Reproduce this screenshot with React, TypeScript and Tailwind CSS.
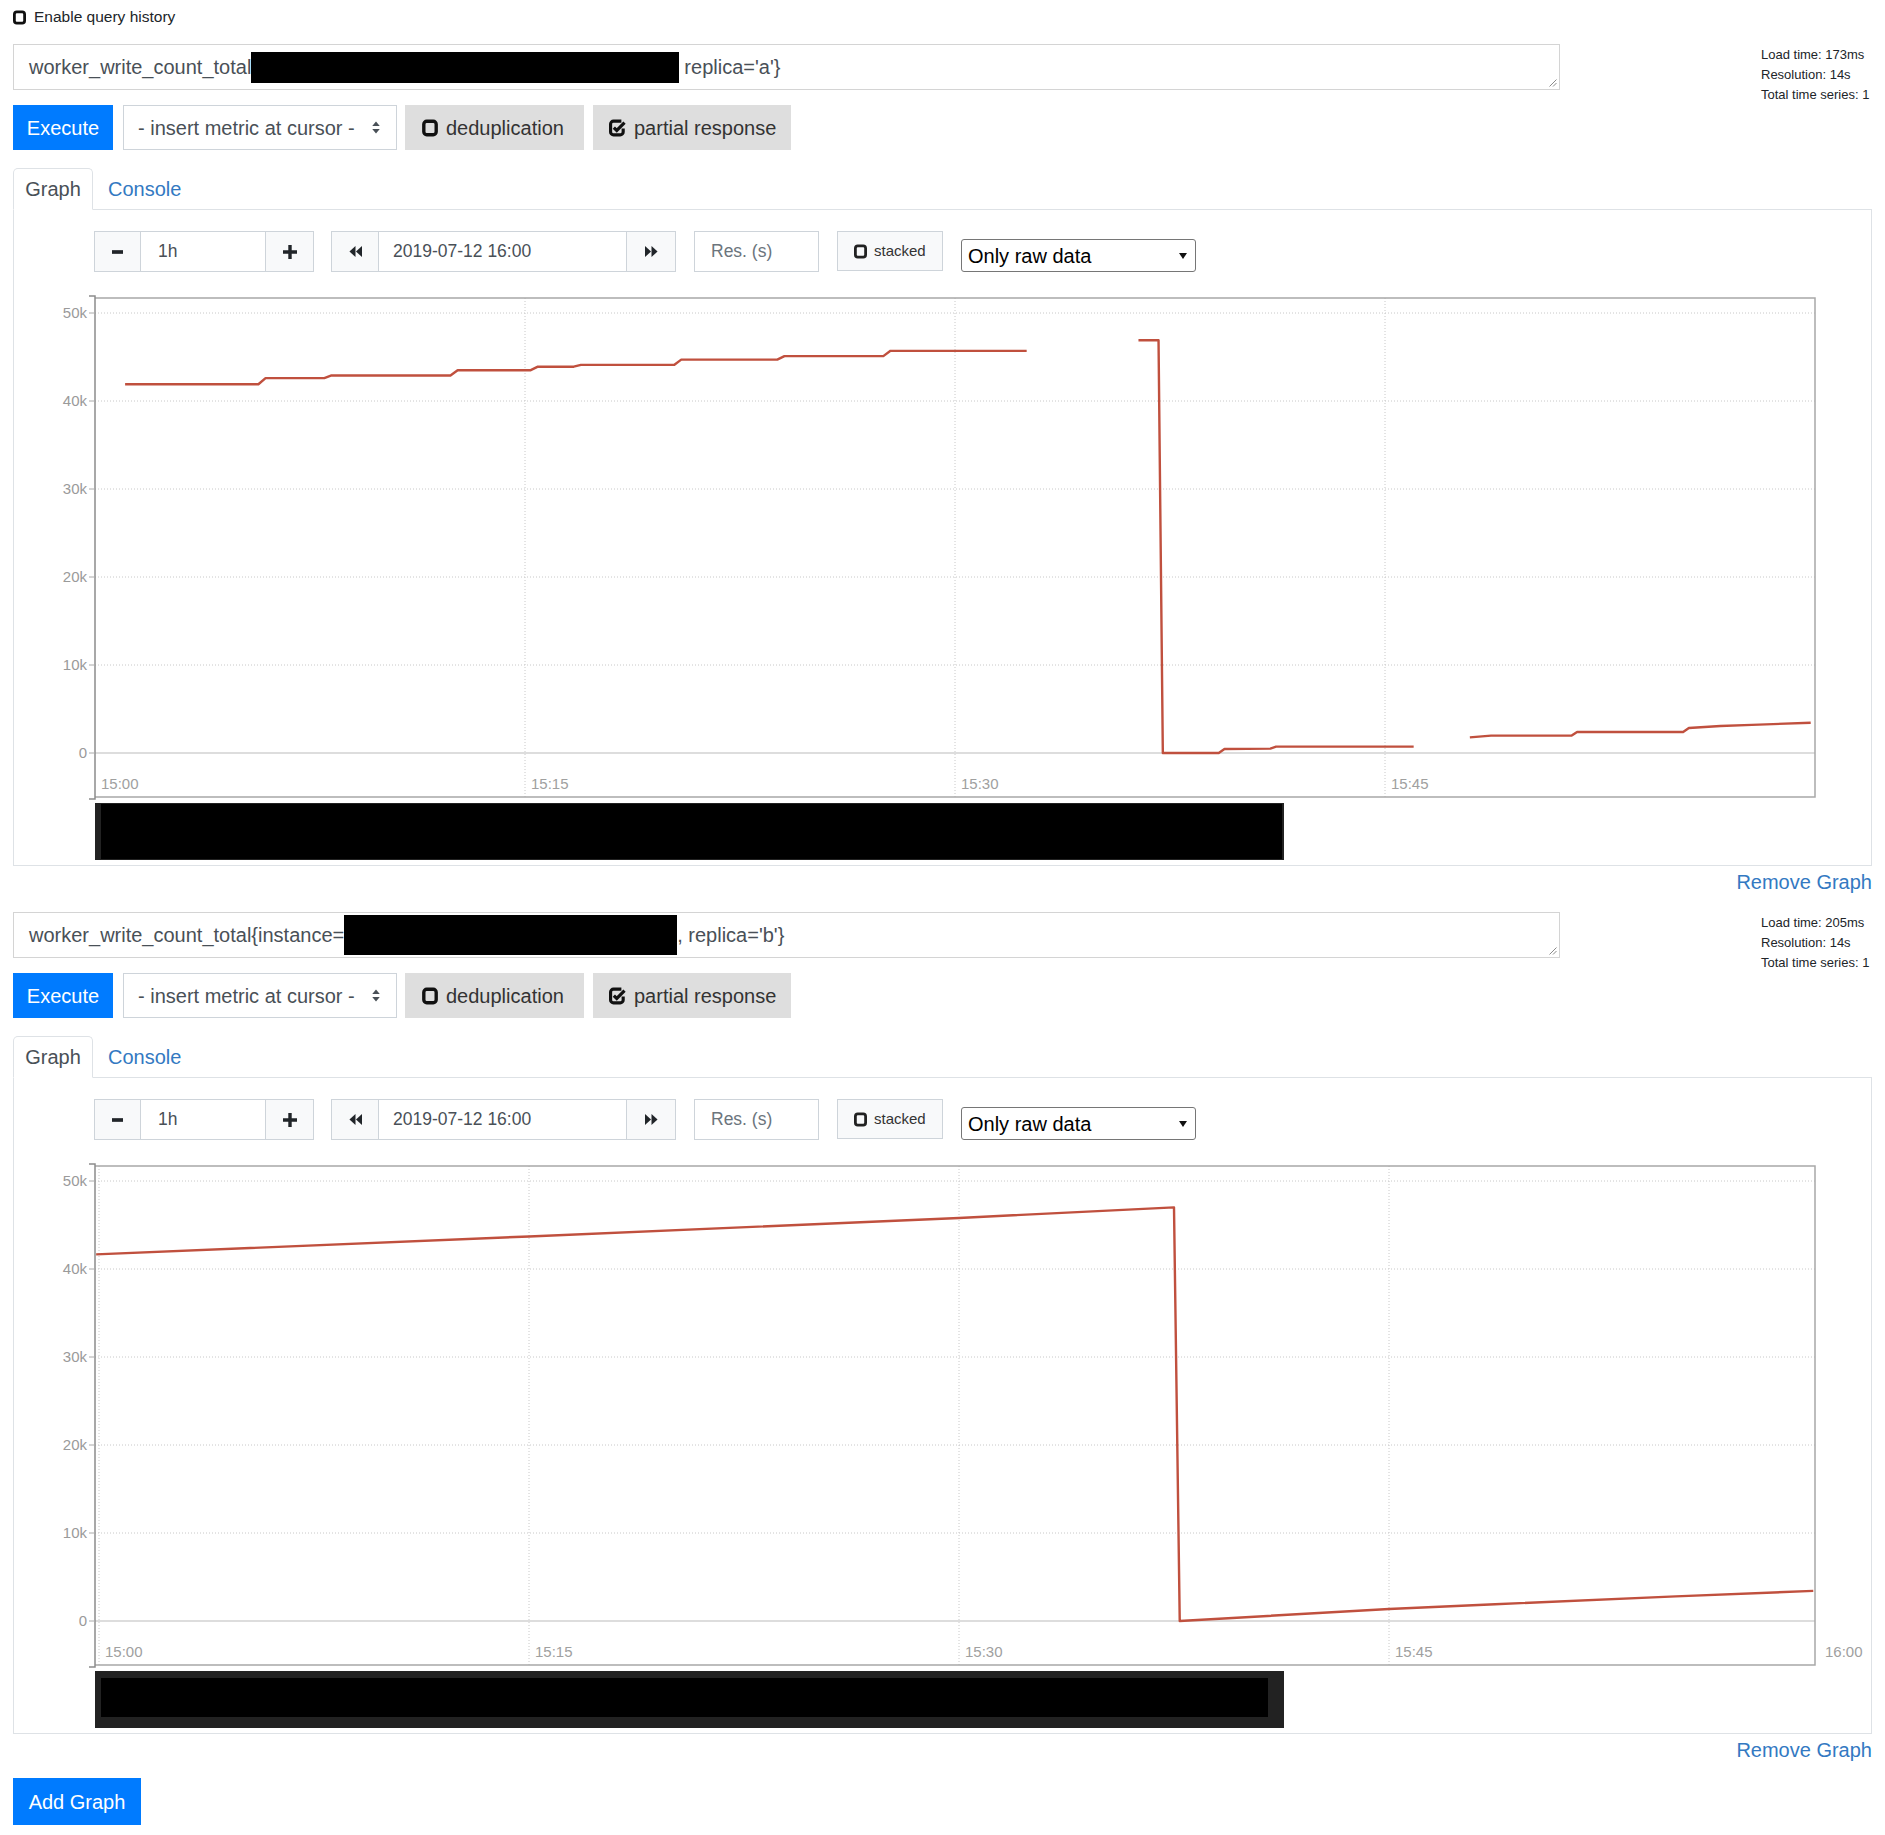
import React from 'react';

type Pt = [number, number];

const Square = ({ className = '' }: { className?: string }) => (
  <svg viewBox="0 0 14 16" className={className}>
    <rect x="1.5" y="2" width="11" height="12" rx="2.6" fill="none" stroke="currentColor" strokeWidth="3" />
  </svg>
);

const CheckSquare = ({ className = '' }: { className?: string }) => (
  <svg viewBox="0 0 16 16" className={className}>
    <path d="M12.6 8.5V11.5a2.6 2.6 0 0 1-2.6 2.6H4a2.6 2.6 0 0 1-2.6-2.6V4.5A2.6 2.6 0 0 1 4 1.9h7" fill="none" stroke="currentColor" strokeWidth="2.8" />
    <path d="M4.3 7.6l2.6 2.6 6.9-7" fill="none" stroke="currentColor" strokeWidth="2.8" />
  </svg>
);

const SortIcon = () => (
  <svg viewBox="0 0 10 16" className="w-[10px] h-[15px] text-[#495057]">
    <polygon points="1,6.5 5,1.5 9,6.5" fill="currentColor" />
    <polygon points="1,9.5 5,14.5 9,9.5" fill="currentColor" />
  </svg>
);

const Minus = () => (
  <svg viewBox="0 0 12 4" className="w-[11px] h-[4px]">
    <rect x="0" y="0" width="12" height="4" fill="#212529" />
  </svg>
);

const Plus = () => (
  <svg viewBox="0 0 14 14" className="w-[14px] h-[14px]">
    <path d="M7 0v14M0 7h14" stroke="#212529" strokeWidth="3.4" />
  </svg>
);

const Backward = () => (
  <svg viewBox="0 0 16 14" className="w-[15px] h-[13px]">
    <polygon points="8,1 1.5,7 8,13" fill="#212529" />
    <polygon points="15,1 8.5,7 15,13" fill="#212529" />
  </svg>
);

const Forward = () => (
  <svg viewBox="0 0 16 14" className="w-[15px] h-[13px]">
    <polygon points="1,1 7.5,7 1,13" fill="#212529" />
    <polygon points="8,1 14.5,7 8,13" fill="#212529" />
  </svg>
);

const series1: Pt[][] = [
  [
    [1.05, 41.9], [5.7, 41.9], [5.95, 42.6], [8.0, 42.6], [8.25, 42.9], [12.4, 42.9], [12.65, 43.5],
    [15.2, 43.5], [15.45, 43.9], [16.7, 43.9], [16.95, 44.1], [20.2, 44.1], [20.45, 44.7], [23.8, 44.7],
    [24.05, 45.1], [27.5, 45.1], [27.75, 45.7], [32.5, 45.7],
  ],
  [
    [36.4, 46.9], [37.1, 46.9], [37.25, 0], [39.2, 0], [39.4, 0.45], [41.0, 0.5], [41.2, 0.72], [46.0, 0.72],
  ],
  [
    [47.96, 1.78], [48.7, 1.97], [51.5, 1.97], [51.7, 2.39], [55.4, 2.39], [55.6, 2.84], [56.7, 3.07],
    [57.8, 3.2], [59.85, 3.44],
  ],
];

const series2: Pt[][] = [
  [
    [-0.1, 41.66], [15, 43.7], [30, 45.8], [37.5, 47.0], [37.7, 0], [45, 1.37], [48.7, 1.9], [55, 2.8], [59.8, 3.42],
  ],
];

function Chart({ segments, x0, labels, grids }: { segments: Pt[][]; x0: number; labels: number[]; grids: number[] }) {
  const px = (m: number) => x0 - 14 + (m * 1720) / 60;
  const py = (k: number) => 463 - k * 8.8;
  const names: Record<number, string> = { 0: '15:00', 15: '15:15', 30: '15:30', 45: '15:45', 60: '16:00' };
  return (
    <svg width="1857" height="510" className="block mt-[18px]" fontFamily="'Liberation Sans', Arial, sans-serif">
      {[10, 20, 30, 40, 50].map((k) => (
        <line key={k} x1="81" x2="1801" y1={py(k)} y2={py(k)} stroke="#c8c8c8" strokeDasharray="1 2" />
      ))}
      {grids.map((m) => (
        <line key={m} x1={px(m)} x2={px(m)} y1="8" y2="507" stroke="#c8c8c8" strokeDasharray="1 2" />
      ))}
      <line x1="81" x2="1801" y1="463" y2="463" stroke="#dddddd" strokeWidth="2" />
      <path d="M81 8H1801V507H81" fill="none" stroke="#a8a8a8" strokeWidth="1.5" />
      <path d="M75 6H81V509H75" fill="none" stroke="#8c8c8c" strokeWidth="1.5" />
      {[0, 10, 20, 30, 40, 50].map((k) => (
        <g key={k}>
          <line x1="75" x2="81" y1={py(k)} y2={py(k)} stroke="#aaaaaa" />
          <text x="73" y={py(k) + 5} textAnchor="end" fontSize="15" fill="#9a9a9a">
            {k === 0 ? '0' : `${k}k`}
          </text>
        </g>
      ))}
      {labels.map((m) => (
        <text key={m} x={px(m) + 6} y="499" fontSize="15" fill="#a0a0a0">
          {names[m]}
        </text>
      ))}
      {segments.map((s, i) => (
        <polyline
          key={i}
          points={s.map(([m, k]) => `${px(m)},${py(k)}`).join(' ')}
          fill="none"
          stroke="#c0503e"
          strokeWidth="2.4"
          strokeLinejoin="round"
        />
      ))}
    </svg>
  );
}

function QueryBox({ prefix, blackW, blackH, suffix, suffixGap }: { prefix: string; blackW: number; blackH: number; suffix: string; suffixGap: number }) {
  return (
    <div className="relative w-[1547px] h-[46px] border border-[#d4d4d4] flex items-center pl-[15px] text-[20px] text-[#495057] whitespace-pre">
      <span>{prefix}</span>
      <span className="bg-black" style={{ width: blackW, height: blackH }} />
      <span style={{ marginLeft: suffixGap }}>{suffix}</span>
      <svg viewBox="0 0 10 10" className="absolute right-[2px] bottom-[2px] w-[10px] h-[10px]">
        <path d="M9.5 2.5L2.5 9.5M9.5 6L6 9.5" stroke="#8a8a8a" strokeWidth="1" />
      </svg>
    </div>
  );
}

function GraphPanel({
  q,
}: {
  q: {
    prefix: string;
    blackW: number;
    blackH: number;
    suffix: string;
    suffixGap: number;
    load: string;
    segments: Pt[][];
    x0: number;
    labels: number[];
    grids: number[];
    legend: 'a' | 'b';
  };
}) {
  return (
    <div>
      <div className="flex items-start h-[46px]">
        <QueryBox prefix={q.prefix} blackW={q.blackW} blackH={q.blackH} suffix={q.suffix} suffixGap={q.suffixGap} />
        <div className="ml-auto mt-px w-[111px] text-[13px] leading-[20px] text-[#212529] whitespace-nowrap">
          <div>Load time: {q.load}</div>
          <div>Resolution: 14s</div>
          <div>Total time series: 1</div>
        </div>
      </div>

      <div className="mt-[15px] flex h-[45px] text-[20px]">
        <button className="w-[100px] h-full bg-[#007bff] text-white">Execute</button>
        <div className="ml-[10px] w-[274px] h-full border border-[#ced4da] flex items-center justify-between pl-[14px] pr-[15px] text-[#495057]">
          <span>- insert metric at cursor -</span>
          <SortIcon />
        </div>
        <button className="ml-[8px] w-[179px] h-full bg-[#dedede] flex items-center pl-[17px] text-[#333]">
          <Square className="w-[16px] h-[18px] text-[#111]" />
          <span className="ml-[8px]">deduplication</span>
        </button>
        <button className="ml-[9px] w-[198px] h-full bg-[#dedede] flex items-center pl-[16px] text-[#333]">
          <CheckSquare className="w-[18px] h-[18px] text-[#111]" />
          <span className="ml-[7px]">partial response</span>
        </button>
      </div>

      <div className="mt-[18px] flex h-[42px] border-b border-[#dee2e6] text-[20px]">
        <div className="w-[80px] h-[42px] -mb-px bg-white border border-[#dee2e6] border-b-white rounded-t-[5px] flex items-center justify-center text-[#495057]">
          Graph
        </div>
        <div className="pl-[15px] flex items-center text-[#3379c2]">Console</div>
      </div>

      <div className="border-x border-b border-[#dee2e6] pt-[21px] pb-[5px]">
        <div className="ml-[80px] flex items-start h-[41px] text-[17.5px] text-[#495057]">
          <div className="w-[47px] h-[41px] bg-[#f8f9fa] border border-[#ced4da] flex items-center justify-center">
            <Minus />
          </div>
          <div className="w-[124px] h-[41px] border-y border-[#ced4da] bg-white flex items-center pl-[17px]">1h</div>
          <div className="w-[49px] h-[41px] bg-[#f8f9fa] border border-[#ced4da] flex items-center justify-center">
            <Plus />
          </div>
          <div className="ml-[17px] w-[48px] h-[41px] bg-[#f8f9fa] border border-[#ced4da] flex items-center justify-center">
            <Backward />
          </div>
          <div className="w-[247px] h-[41px] border-y border-[#ced4da] bg-white flex items-center pl-[14px]">2019-07-12 16:00</div>
          <div className="w-[50px] h-[41px] bg-[#f8f9fa] border border-[#ced4da] flex items-center justify-center">
            <Forward />
          </div>
          <div className="ml-[18px] w-[125px] h-[41px] border border-[#ced4da] bg-white flex items-center pl-[16px] text-[#6c757d]">
            Res. (s)
          </div>
          <div className="ml-[18px] w-[106px] h-[40px] bg-[#f8f9fa] border border-[#ced4da] flex items-center pl-[16px] text-[15px] text-[#333]">
            <Square className="w-[13px] h-[15px] text-[#222]" />
            <span className="ml-[7px]">stacked</span>
          </div>
          <div className="ml-[18px] mt-[8px] w-[235px] h-[33px] border border-[#767676] rounded-[3px] bg-white flex items-center justify-between pl-[6px] pr-[8px] text-[20px] text-black">
            <span>Only raw data</span>
            <svg viewBox="0 0 8 6" className="w-[8px] h-[6px]">
              <polygon points="0,0 8,0 4,6" fill="#111" />
            </svg>
          </div>
        </div>

        <Chart segments={q.segments} x0={q.x0} labels={q.labels} grids={q.grids} />

        {q.legend === 'a' ? (
          <div className="ml-[81px] mt-[3px] h-[57px] w-[1189px] bg-black border-l-[6px] border-y border-r-2 border-[#222]" />
        ) : (
          <div className="ml-[81px] mt-[3px] h-[57px] w-[1189px] bg-[#222] pl-[6px] pt-[7px] pr-[16px] pb-[11px]">
            <div className="h-full bg-black" />
          </div>
        )}
      </div>

      <div className="mt-[4px] h-[24px] leading-[24px] text-right text-[20px] text-[#3379c2]">Remove Graph</div>
    </div>
  );
}

export default function App() {
  return (
    <div className="w-[1885px] min-h-[1835px] bg-white px-[13px] pb-[10px] font-['Liberation_Sans',Arial,sans-serif] text-[#212529]">
      <div className="pt-[7px] h-[27px] flex items-center text-[15.5px]">
        <Square className="w-[13px] h-[15px] text-[#111]" />
        <span className="ml-[8px]">Enable query history</span>
      </div>

      <div className="mt-[17px]">
        <GraphPanel
          q={{
            prefix: 'worker_write_count_total',
            blackW: 428,
            blackH: 31,
            suffix: "replica='a'}",
            suffixGap: 5,
            load: '173ms',
            segments: series1,
            x0: 95,
            labels: [0, 15, 30, 45],
            grids: [15, 30, 45],
            legend: 'a',
          }}
        />
      </div>

      <div className="mt-[18px]">
        <GraphPanel
          q={{
            prefix: 'worker_write_count_total{instance=',
            blackW: 333,
            blackH: 40,
            suffix: ", replica='b'}",
            suffixGap: 0,
            load: '205ms',
            segments: series2,
            x0: 99,
            labels: [0, 15, 30, 45, 60],
            grids: [0, 15, 30, 45],
            legend: 'b',
          }}
        />
      </div>

      <button className="mt-[16px] w-[128px] h-[47px] bg-[#007bff] text-white text-[20px]">Add Graph</button>
    </div>
  );
}
